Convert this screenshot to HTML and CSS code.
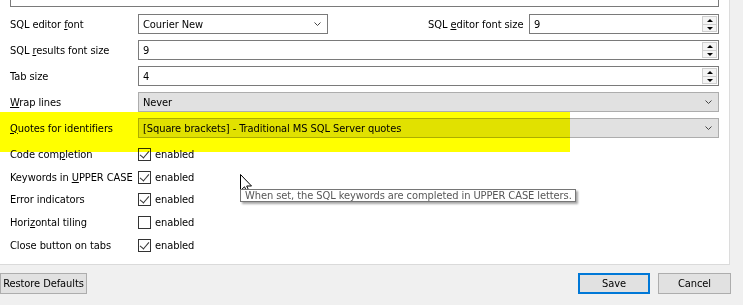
FILE: index.html
```html
<!DOCTYPE html>
<html lang="en">
<head>
    <meta charset="UTF-8">
    <title>Preferences - SQL Editor</title>
    <link rel="stylesheet" href="styles.css">
</head>
<body>
    <div class="window">
        <div class="panel">
            <!-- tail of the field above (scrolled) -->
            <div class="prev-field"></div>

            <div class="form">
                <div class="row">
                    <label class="lbl">SQL editor <u>f</u>ont</label>
                    <div class="combo combo-font">
                        <span class="value">Courier New</span>
                        <svg class="chevron" viewBox="0 0 7 4"><polyline points="0.5,0.5 3.5,3.5 6.5,0.5"/></svg>
                    </div>
                    <label class="lbl lbl-right">SQL <u>e</u>ditor font size</label>
                    <div class="spin spin-half">
                        <span class="value">9</span>
                        <span class="spin-btns"><span class="up"></span><span class="down"></span></span>
                    </div>
                </div>
                <div class="row">
                    <label class="lbl">SQL <u>r</u>esults font size</label>
                    <div class="spin spin-full">
                        <span class="value">9</span>
                        <span class="spin-btns"><span class="up"></span><span class="down"></span></span>
                    </div>
                </div>
                <div class="row">
                    <label class="lbl">Tab size</label>
                    <div class="spin spin-full">
                        <span class="value">4</span>
                        <span class="spin-btns"><span class="up"></span><span class="down"></span></span>
                    </div>
                </div>
                <div class="row">
                    <label class="lbl"><u>W</u>rap lines</label>
                    <div class="combo combo-list">
                        <span class="value">Never</span>
                        <svg class="chevron" viewBox="0 0 7 4"><polyline points="0.5,0.5 3.5,3.5 6.5,0.5"/></svg>
                    </div>
                </div>
                <div class="row">
                    <label class="lbl"><u>Q</u>uotes for identifiers</label>
                    <div class="combo combo-list">
                        <span class="value">[Square brackets] - Traditional MS SQL Server quotes</span>
                        <svg class="chevron" viewBox="0 0 7 4"><polyline points="0.5,0.5 3.5,3.5 6.5,0.5"/></svg>
                    </div>
                </div>

                <div class="checks">
                    <div class="check-row">
                        <label class="lbl">Code com<u>p</u>letion</label>
                        <span class="box checked"></span><span class="check-text">enabled</span>
                    </div>
                    <div class="check-row">
                        <label class="lbl">Keywords in <u>U</u>PPER CASE</label>
                        <span class="box checked"></span><span class="check-text">enabled</span>
                    </div>
                    <div class="check-row">
                        <label class="lbl">Error indicators</label>
                        <span class="box checked"></span><span class="check-text">enabled</span>
                    </div>
                    <div class="check-row">
                        <label class="lbl">Hori<u>z</u>ontal tiling</label>
                        <span class="box"></span><span class="check-text">enabled</span>
                    </div>
                    <div class="check-row">
                        <label class="lbl">Close button on tabs</label>
                        <span class="box checked"></span><span class="check-text">enabled</span>
                    </div>
                </div>
            </div>
        </div>

        <div class="footer">
            <button class="btn btn-restore">Restore Defaults</button>
            <div class="footer-right">
                <button class="btn btn-save">Save</button>
                <button class="btn btn-cancel">Cancel</button>
            </div>
        </div>

        <!-- overlays: highlighter mark, mouse cursor and tooltip -->
        <div class="highlight"></div>
        <svg class="cursor" viewBox="0 0 12 19">
            <path d="M0.5 0.5 L0.5 16.5 L4.5 12.8 L7.2 18.5 L9.3 17.6 L6.7 12 L11.5 12 Z"/>
        </svg>
        <div class="tooltip">When set, the SQL keywords are completed in UPPER CASE letters.</div>
    </div>
</body>
</html>
```

FILE: styles.css
```css
body {
    margin: 0;
    background: #f0f0f0;
    font-family: "DejaVu Sans Condensed", "DejaVu Sans", sans-serif;
    font-size: 11px;
    letter-spacing: -0.08px;
    color: #000;
    overflow: hidden;
}

.window {
    position: relative;
    width: 743px;
    height: 305px;
}

.panel {
    width: 729px;
    height: 264px;
    background: #fff;
    border-right: 1px solid #dcdcdc;
    border-bottom: 1px solid #dadada;
}

.prev-field {
    margin-left: 10px;
    width: 707px;
    height: 6px;
    border: 1px solid #7a7a7a;
    border-top: none;
}

.form {
    padding: 7px 0 0 10px;
}

.row {
    display: flex;
    align-items: center;
    height: 20px;
    margin-bottom: 6px;
}

.lbl {
    width: 128px;
    flex-shrink: 0;
    white-space: nowrap;
}

.lbl-right {
    width: 101px;
    margin-left: 100px;
}

.combo,
.spin {
    position: relative;
    display: flex;
    align-items: center;
    box-sizing: border-box;
    height: 20px;
    border: 1px solid #7a7a7a;
    background: #fff;
    white-space: nowrap;
}

.value {
    padding-left: 4px;
}

.combo-font {
    width: 190px;
}

.combo-list {
    width: 581px;
    background: #e1e1e1;
    border-color: #adadad;
}

.chevron {
    position: absolute;
    right: 6px;
    top: 7px;
    width: 7px;
    height: 4px;
    fill: none;
    stroke: #444;
    stroke-width: 1;
}

.spin-half {
    width: 190px;
}

.spin-full {
    width: 581px;
}

.spin-btns {
    position: absolute;
    right: 1px;
    top: 1px;
    width: 15px;
    height: 16px;
    display: flex;
    flex-direction: column;
}

.spin-btns span {
    position: relative;
    flex: 1;
    box-sizing: border-box;
    border: 1px solid #cfcfcf;
    background: #f4f4f4;
}

.spin-btns .up {
    border-bottom: none;
}

.spin-btns span::after {
    content: "";
    position: absolute;
    left: 4px;
    width: 0;
    height: 0;
    border-left: 3px solid transparent;
    border-right: 3px solid transparent;
}

.spin-btns .up::after {
    top: 2px;
    border-bottom: 3px solid #000;
}

.spin-btns .down::after {
    top: 2px;
    border-top: 3px solid #000;
}

.checks {
    margin-top: -1px;
}

.check-row {
    display: flex;
    align-items: center;
    height: 22.75px;
}

.box {
    position: relative;
    width: 13px;
    height: 13px;
    box-sizing: border-box;
    border: 1px solid #333;
    background: #fff;
}

.box.checked::after {
    content: "";
    position: absolute;
    left: 3px;
    top: 0;
    width: 4px;
    height: 8px;
    border-right: 1px solid #333;
    border-bottom: 1px solid #333;
    transform: rotate(40deg);
}

.check-text {
    margin-left: 4px;
}

.footer {
    display: flex;
    justify-content: space-between;
    padding: 8px 12px 0 0;
}

.footer-right {
    display: flex;
    gap: 8px;
}

.btn {
    height: 21px;
    box-sizing: border-box;
    background: #e1e1e1;
    border: 1px solid #adadad;
    font-family: inherit;
    font-size: 11px;
    letter-spacing: inherit;
    color: #000;
    padding: 0;
}

.btn-restore {
    width: 87px;
}

.btn-save {
    width: 72px;
    border: 2px solid #0078d7;
}

.btn-cancel {
    width: 73px;
}

.highlight {
    position: absolute;
    left: 0;
    top: 112px;
    width: 570px;
    height: 40px;
    background: #ffff00;
    mix-blend-mode: multiply;
}

.cursor {
    position: absolute;
    left: 240px;
    top: 174px;
    width: 12px;
    height: 19px;
    fill: #fff;
    stroke: #000;
    stroke-width: 1;
}

.tooltip {
    position: absolute;
    left: 240px;
    top: 189px;
    width: 336px;
    height: 13px;
    box-sizing: border-box;
    border: 1px solid #767676;
    background: #fff;
    box-shadow: 2px 2px 2px rgba(0, 0, 0, 0.35);
    color: #575757;
    line-height: 11px;
    padding-left: 4px;
    white-space: nowrap;
}
```
